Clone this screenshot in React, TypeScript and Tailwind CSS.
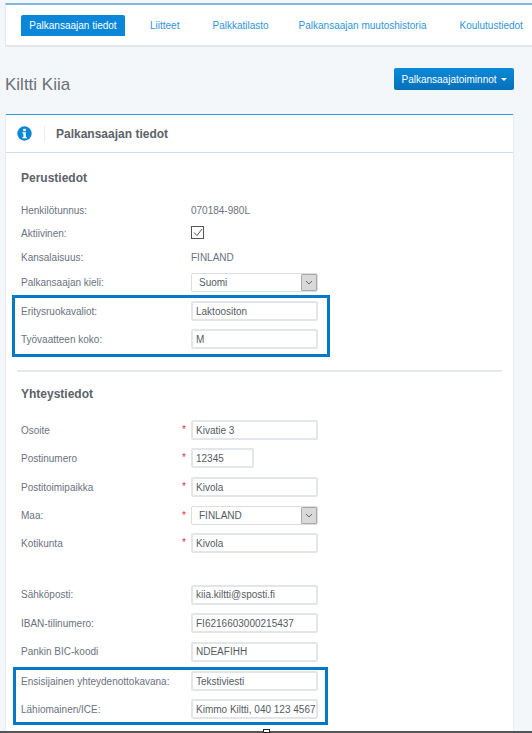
const tabs = ["Liitteet", "Palkkatilasto", "Palkansaajan muutoshistoria", "Koulutustiedot"];

const Field = ({value, small}: {value: string; small?: boolean}) => (
    <div className={`${small ? "w-[63px]" : "w-[127px]"} h-[20px] flex items-center px-[3px] bg-white border-2 border-[#e2e6ea] rounded-[2px] text-[#555b63] whitespace-nowrap overflow-hidden`}>
        {value}
    </div>
);

const SelectBox = ({value}: {value: string}) => (
    <div className="w-[127px] h-[19px] flex items-center bg-white border border-[#d9dee3] rounded-[2px] text-[#555b63]">
        <span className="flex-1 pl-[7px]">{value}</span>
        <span className="w-[16px] h-full flex items-center justify-center bg-[#d9d9d9] border border-[#a9a9a9] rounded-[1px]">
            <svg width="8" height="5" viewBox="0 0 8 5" fill="none" stroke="#666" strokeWidth="1">
                <path d="M1 1l3 3 3-3"/>
            </svg>
        </span>
    </div>
);

const Row = ({label, height, star, children}: {label: string; height: string; star?: boolean; children: React.ReactNode}) => (
    <div className={`${height} flex items-center`}>
        <span className="w-[161px] text-[#6b7280] whitespace-nowrap">{label}</span>
        <span className="w-[9px] text-[#e0343c] text-[10px] leading-none">{star ? "*" : ""}</span>
        {children}
    </div>
);

const App = () => {
    return (
        <div className="relative w-[532px] h-[733px] overflow-hidden bg-[#f3f7fa] pt-[3px] pl-[5px] text-[10px] font-['Liberation_Sans',Arial,sans-serif]">
            <div className="h-[44px] flex items-center pl-[15px] bg-white border-t-2 border-t-[#7db8e0] border-b-2 border-b-[#e3e8ec] border-l border-l-[#e3e8ec] text-[#2f96dc] whitespace-nowrap">
                <span className="w-[104px] h-[21px] flex items-center justify-center bg-[#0a87d8] text-white rounded-t-[2px]">Palkansaajan tiedot</span>
                <span className="ml-[25px]">{tabs[0]}</span>
                <span className="ml-[33px]">{tabs[1]}</span>
                <span className="ml-[30px]">{tabs[2]}</span>
                <span className="ml-[33px]">{tabs[3]}</span>
            </div>

            <div className="w-[509px] h-[67px] flex items-start justify-between">
                <h1 className="mt-[28px] text-[17px] leading-[20px] text-[#6b7076]">Kiltti Kiia</h1>
                <button className="mt-[21px] w-[120px] h-[22px] flex items-center justify-center gap-[4px] text-white rounded-[2px] bg-gradient-to-b from-[#0a8ad9] to-[#0670b8]">
                    Palkansaajatoiminnot
                    <span className="w-0 h-0 border-x-[3px] border-x-transparent border-t-[3px] border-t-white"></span>
                </button>
            </div>

            <div className="w-[509px] h-[617px] bg-white border-t border-t-[#2b9be0] border-r border-r-[#e6ebef] border-l border-l-[#e6ebef] rounded-t-[2px] -mb-px">
                <div className="h-[38px] flex items-center border-b border-[#cfe0ec]">
                    <svg className="ml-[11px]" width="15" height="15" viewBox="0 0 15 15">
                        <circle cx="7.5" cy="7.5" r="7.2" fill="#0a87d8"/>
                        <rect x="6.2" y="2.8" width="2.6" height="2.4" fill="#fff"/>
                        <path d="M5.4 6.2h3.4v4.8h1v1.2H5.4V11h1V7.4h-1z" fill="#fff"/>
                    </svg>
                    <span className="ml-[12px] w-px h-[16px] bg-[#eaeef1]"></span>
                    <span className="ml-[11px] text-[12px] font-bold text-[#5c6269]">Palkansaajan tiedot</span>
                </div>

                <div className="pl-[15px]">
                    <h2 className="h-[15px] mt-[18px] mb-[12px] text-[12px] leading-[15px] font-bold text-[#5c6269]">Perustiedot</h2>
                    <Row label="Henkilötunnus:" height="h-[24px]"><span className="text-[#6b7280]">070184-980L</span></Row>
                    <Row label="Aktiivinen:" height="h-[23px]">
                        <span className="w-[13px] h-[13px] -mt-[2px] flex items-center justify-center border border-[#555] bg-white">
                            <svg width="10" height="9" viewBox="0 0 10 9" fill="none" stroke="#555" strokeWidth="1">
                                <path d="M1 4.5l3 3 5-6.5"/>
                            </svg>
                        </span>
                    </Row>
                    <Row label="Kansalaisuus:" height="h-[25px]"><span className="text-[#6b7280]">FINLAND</span></Row>
                    <Row label="Palkansaajan kieli:" height="h-[25px]"><SelectBox value="Suomi"/></Row>

                    <div className="w-[318px] h-[62px] -ml-[9px] pl-[9px] pb-[2px] flex flex-col justify-center border-[3px] border-[#0579c9]">
                        <div className="-ml-[3px]">
                            <Row label="Eritysruokavaliot:" height="h-[28px]"><Field value="Laktoositon"/></Row>
                            <Row label="Työvaatteen koko:" height="h-[28px]"><Field value="M"/></Row>
                        </div>
                    </div>

                    <div className="w-[485px] h-[2px] mt-[13px] -ml-[4px] bg-[#e6eaee]"></div>

                    <h2 className="h-[15px] mt-[15px] mb-[14px] text-[12px] leading-[15px] font-bold text-[#5c6269]">Yhteystiedot</h2>
                    <Row label="Osoite" height="h-[28px]" star><Field value="Kivatie 3"/></Row>
                    <Row label="Postinumero" height="h-[28px]" star><Field value="12345" small/></Row>
                    <Row label="Postitoimipaikka" height="h-[30px]" star><Field value="Kivola"/></Row>
                    <Row label="Maa:" height="h-[27px]" star><SelectBox value="FINLAND"/></Row>
                    <Row label="Kotikunta" height="h-[28px]" star><Field value="Kivola"/></Row>

                    <div className="h-[23px]"></div>
                    <Row label="Sähköposti:" height="h-[29px]"><Field value="kiia.kiltti@sposti.fi"/></Row>
                    <Row label="IBAN-tilinumero:" height="h-[28px]"><Field value="FI6216603000215437"/></Row>
                    <Row label="Pankin BIC-koodi" height="h-[29px]"><Field value="NDEAFIHH"/></Row>

                    <div className="w-[315px] h-[58px] -ml-[8px] mt-[1px] pl-[8px] pb-[2px] flex flex-col justify-center border-[3px] border-[#0579c9]">
                        <div className="-ml-[3px]">
                            <Row label="Ensisijainen yhteydenottokavana:" height="h-[28px]"><Field value="Tekstiviesti"/></Row>
                            <Row label="Lähiomainen/ICE:" height="h-[28px]"><Field value="Kimmo Kiltti, 040 123 4567"/></Row>
                        </div>
                    </div>
                </div>
            </div>

            <div className="absolute left-0 right-0 bottom-0 h-[2px] bg-[#555]"></div>
            <div className="absolute left-[263px] bottom-0 w-[7px] h-[4px] bg-white border border-[#222]"></div>
        </div>
    );
};

export default App;
